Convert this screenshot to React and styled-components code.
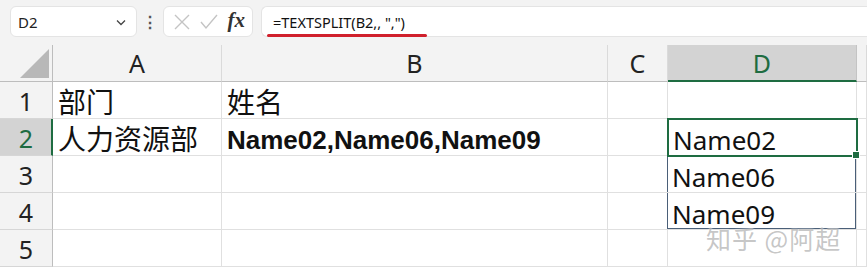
import React from 'react'
import styled, { createGlobalStyle } from 'styled-components'

const GlobalStyle = createGlobalStyle`
  html, body { margin: 0; padding: 0; background: #fff; }
  body { font-family: "Noto Sans", "Noto Sans CJK SC", sans-serif; }
`

const GREEN = '#1e6c41'
const SPILL = '#4a5f78'
const GRID = '#e0e0e0'

const Page = styled.div`
  width: 867px;
  height: 270px;
  overflow: hidden;
  position: relative;
  background: #fff;
`

const Toolbar = styled.div`
  height: 45px;
  background: #f3f3f3;
  display: flex;
  align-items: flex-start;
  padding: 6px 0 0 10px;
  box-sizing: border-box;
`

const Box = styled.div`
  height: 31px;
  box-sizing: border-box;
  background: #fff;
  border: 1px solid #e4e4e4;
  border-radius: 6px;
  display: flex;
  align-items: center;
`

const NameBox = styled(Box)`
  width: 127px;
  padding: 0 8px 0 7px;
  justify-content: space-between;
  font-size: 15px;
  color: #222;
`

const Dots = styled.div`
  width: 26px;
  display: flex;
  justify-content: center;
  align-items: center;
  height: 31px;
  color: #555;
  font-size: 16px;
  font-weight: bold;
`

const FxBox = styled(Box)`
  width: 90px;
  padding: 0 7px 0 9px;
  justify-content: space-between;
`

const Fx = styled.span`
  font-family: "Liberation Serif", "DejaVu Serif", serif;
  font-style: italic;
  font-weight: 700;
  font-size: 21px;
  color: #333;
  line-height: 1;
  margin-top: -3px;
`

const FormulaBox = styled(Box)`
  flex: 1;
  margin-left: 8px;
  border-right: none;
  border-radius: 6px 0 0 6px;
  padding-left: 11px;
  font-size: 14.5px;
  color: #111;
  position: relative;
`

const Underline = styled.div`
  position: absolute;
  left: 5px;
  top: 27px;
  width: 160px;
  height: 3px;
  border-radius: 2px;
  background: #d0202c;
`

const Sheet = styled.div`
  display: grid;
  grid-template-columns: 53px 169px 386px 60px 189px 1fr;
  grid-auto-rows: 37px;
`

const Cell = styled.div`
  box-sizing: border-box;
  border-right: 1px solid ${GRID};
  border-bottom: 1px solid ${GRID};
  display: flex;
  align-items: flex-end;
  padding: 0 0 0 5px;
  font-size: ${p => (p.$cjk ? '28px' : '26px')};
  font-weight: ${p => (p.$bold ? 700 : 400)};
  font-family: ${p => (p.$bold ? '"Liberation Sans", Arial, sans-serif' : '"Noto Sans", "Noto Sans CJK SC", sans-serif')};
  color: #111;
  line-height: 1.1;
  white-space: nowrap;
  position: relative;
  ${p => p.$selected && `
    outline: 2px solid ${GREEN};
    outline-offset: -1px;
    z-index: 2;
  `}
  ${p => p.$spill && `
    box-shadow: inset 1px 0 0 ${SPILL}, inset -1px 0 0 ${SPILL}${p.$spillEnd ? `, inset 0 -1px 0 ${SPILL}` : ''};
    margin-left: -1px;
  `}
`

const ColHead = styled.div`
  box-sizing: border-box;
  background: ${p => (p.$active ? '#d3d3d3' : '#f3f3f3')};
  border-right: 1px solid ${p => (p.$active ? '#c4c4c4' : '#dadada')};
  border-bottom: ${p => (p.$active ? `2px solid ${GREEN}` : '1px solid #bdbdbd')};
  display: flex;
  align-items: center;
  justify-content: center;
  font-size: 25px;
  color: ${p => (p.$active ? GREEN : '#222')};
  padding-top: ${p => (p.$active ? '1px' : '0')};
`

const Corner = styled.div`
  box-sizing: border-box;
  background: #f3f3f3;
  border-right: 1px solid #bdbdbd;
  border-bottom: 1px solid #bdbdbd;
  display: flex;
  align-items: flex-end;
  justify-content: flex-end;
  padding: 0 3px 3px 0;
`

const Triangle = styled.div`
  width: 0;
  height: 0;
  border-left: 29px solid transparent;
  border-bottom: 29px solid #b8b8b8;
`

const RowHead = styled.div`
  box-sizing: border-box;
  background: ${p => (p.$active ? '#d3d3d3' : '#f3f3f3')};
  border-right: ${p => (p.$active ? `2px solid ${GREEN}` : '1px solid #bdbdbd')};
  border-bottom: 1px solid #d6d6d6;
  display: flex;
  align-items: center;
  justify-content: center;
  font-size: 25px;
  color: ${p => (p.$active ? GREEN : '#222')};
  padding: 2px 0 0 ${p => (p.$active ? '1px' : '0')};
`

const Handle = styled.div`
  position: absolute;
  right: -4px;
  bottom: -4px;
  width: 6px;
  height: 6px;
  background: ${GREEN};
  border: 1px solid #fff;
  z-index: 3;
`

const Watermark = styled.div`
  position: absolute;
  left: 706px;
  top: 226px;
  font-size: 25px;
  line-height: 1;
  letter-spacing: 1px;
  color: rgba(150, 150, 150, 0.55);
  text-shadow: 0 0 2px #fff;
  font-family: "Noto Sans CJK SC", sans-serif;
  z-index: 4;
`

const cols = ['A', 'B', 'C', 'D', 'E']

const rows = [
  ['部门', '姓名', '', '', ''],
  ['人力资源部', 'Name02,Name06,Name09', '', 'Name02', ''],
  ['', '', '', 'Name06', ''],
  ['', '', '', 'Name09', ''],
  ['', '', '', '', ''],
]

const isCjk = s => /[\u4e00-\u9fff]/.test(s)

export default function App() {
  return (
    <Page>
      <GlobalStyle />
      <Toolbar>
        <NameBox>
          <span>D2</span>
          <svg width="14" height="14" viewBox="0 0 14 14" fill="none" stroke="#444" strokeWidth="1.3">
            <path d="M3 5.5l4 4 4-4" />
          </svg>
        </NameBox>
        <Dots>⋮</Dots>
        <FxBox>
          <svg width="18" height="18" viewBox="0 0 18 18" fill="none" stroke="#c4c4c4" strokeWidth="1.4">
            <path d="M2 2l14 14M16 2L2 16" />
          </svg>
          <svg width="20" height="18" viewBox="0 0 20 18" fill="none" stroke="#c4c4c4" strokeWidth="1.4">
            <path d="M2 9l5 6L18 2" />
          </svg>
          <Fx>fx</Fx>
        </FxBox>
        <FormulaBox>
          =TEXTSPLIT(B2,, ",")
          <Underline />
        </FormulaBox>
      </Toolbar>
      <Sheet>
        <Corner><Triangle /></Corner>
        {cols.map(c => (
          <ColHead key={c} $active={c === 'D'}>{c === 'E' ? '' : c}</ColHead>
        ))}
        {rows.map((r, i) => (
          <React.Fragment key={i}>
            <RowHead $active={i === 1}>{i + 1}</RowHead>
            {r.map((v, j) => {
              const selected = i === 1 && j === 3
              const spill = j === 3 && (i === 2 || i === 3)
              return (
                <Cell
                  key={j}
                  $cjk={isCjk(v)}
                  $bold={i === 1 && j === 1}
                  $selected={selected}
                  $spill={spill}
                  $spillEnd={i === 3}
                >
                  {v}
                  {selected && <Handle />}
                </Cell>
              )
            })}
          </React.Fragment>
        ))}
      </Sheet>
      <Watermark>知乎 @阿超</Watermark>
    </Page>
  )
}
